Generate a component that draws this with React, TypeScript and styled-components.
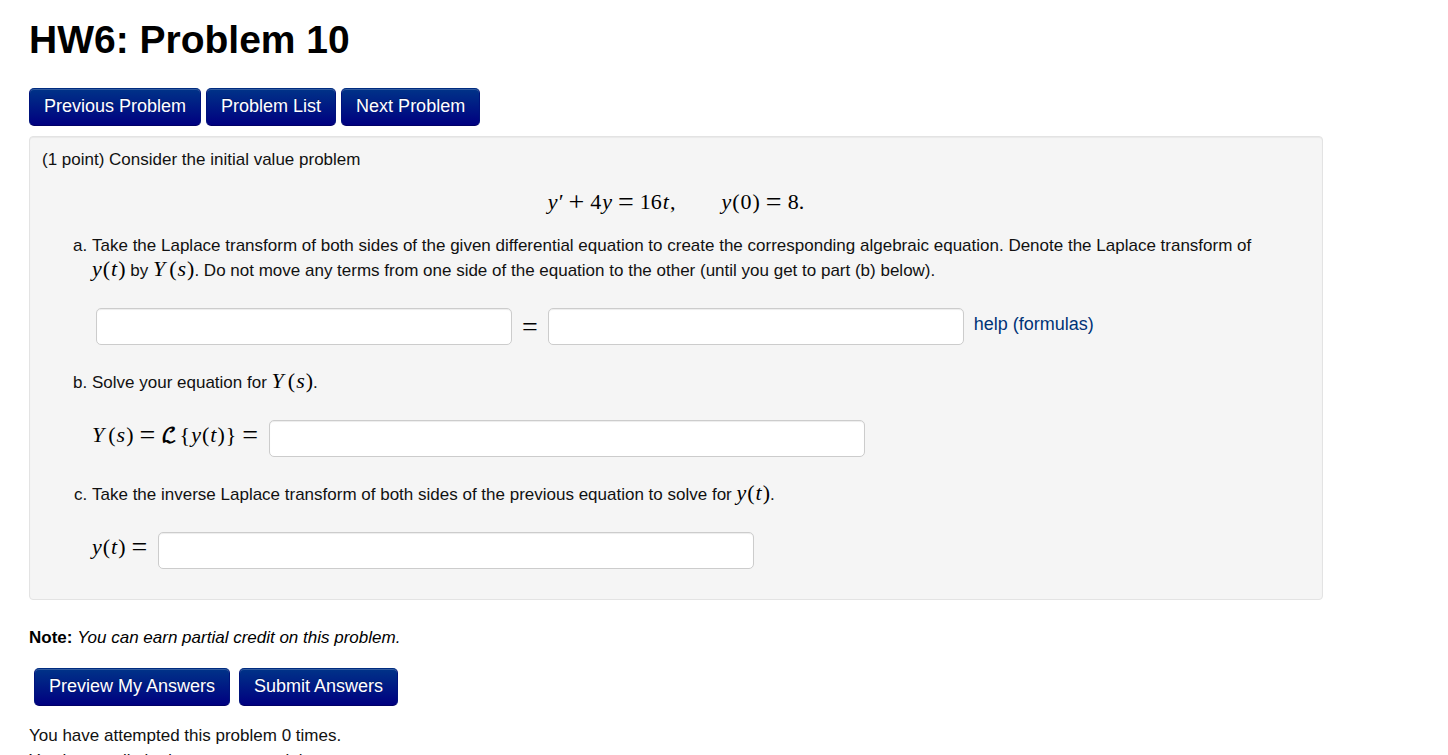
import React from 'react';
import styled, { createGlobalStyle } from 'styled-components';

const GlobalStyle = createGlobalStyle`
  html {
    scrollbar-width: none;
  }
  body {
    margin: 0;
    background: #fff;
    color: #111;
    font: 17px/25px "Liberation Sans", Arial, sans-serif;
  }
`;

const Page = styled.main`
  padding: 15px 125px 25px 29px;
`;

const Title = styled.h1`
  margin: 0 0 23px;
  color: #000;
  font-size: 39px;
  line-height: 50px;
`;

const ButtonRow = styled.div<{ $gap: number; $inset?: number }>`
  display: flex;
  flex-wrap: wrap;
  gap: ${(p) => p.$gap}px;
  padding-left: ${(p) => p.$inset ?? 0}px;
`;

const Button = styled.button`
  height: 38px;
  padding: 0 14px 2px;
  border: 1px solid;
  border-color: #002c80 #00137c #000066;
  border-radius: 5px;
  background: linear-gradient(#003388, #000080);
  box-shadow: inset 0 1px 0 rgba(255, 255, 255, 0.2);
  color: #fff;
  font: 18px/25px "Liberation Sans", Arial, sans-serif;
  text-shadow: 0 -1px 0 rgba(0, 0, 0, 0.25);
  cursor: pointer;
`;

const Panel = styled.section`
  margin: 10px 0 25px;
  padding: 10px 12px 30px;
  border: 1px solid #e3e3e3;
  border-radius: 4px;
  background: #f5f5f5;
  box-shadow: inset 0 1px 1px rgba(0, 0, 0, 0.05);
`;

const Paragraph = styled.p`
  margin: 0;
`;

const Display = styled.div`
  display: flex;
  justify-content: center;
  gap: 46px;
  margin: 20px 0 21px;
`;

const Parts = styled.ol`
  display: flex;
  flex-direction: column;
  gap: 25px;
  margin: 0;
  padding: 0 40px 0 50px;
  list-style: lower-alpha;
`;

const AnswerRow = styled.div<{ $inset?: number }>`
  display: flex;
  align-items: center;
  gap: 10px;
  margin-top: 25px;
  padding-left: ${(p) => p.$inset ?? 0}px;
`;

const Answer = styled.input<{ $width: number }>`
  box-sizing: border-box;
  flex: 0 1 ${(p) => p.$width}px;
  min-width: 0;
  height: 37px;
  padding: 5px 8px;
  border: 1px solid #ccc;
  border-radius: 5px;
  background: #fff;
  box-shadow: inset 0 1px 1px rgba(0, 0, 0, 0.075);
  font: inherit;
`;

const AnswerLabel = styled.label`
  padding: 0 1px 4px 0;
`;

const HelpLink = styled.a`
  padding-bottom: 4px;
  color: #003377;
  font-size: 18px;
  text-decoration: none;
`;

const Formula = styled.span`
  display: inline-flex;
  align-items: baseline;
  gap: 1px;
  height: 20px;
  color: #000;
  font: 22px/20px "Liberation Serif", "Times New Roman", serif;
  white-space: nowrap;
`;

const Operator = styled.span`
  align-self: center;
  margin: 0 5px;
  font-size: 28px;

  &:first-child {
    margin-left: 0;
  }
  &:last-child {
    margin-right: 0;
  }
`;

const Capital = styled.i`
  margin-right: 3px;
`;

const Script = styled.span`
  margin-right: 2px;
  font-family: "DejaVu Math TeX Gyre", "DejaVu Sans", serif;
  font-size: 20px;
  font-weight: bold;
`;

const Equals = () => <Operator>=</Operator>;

const YofT = () => (
  <>
    <i>y</i>
    <span>(</span>
    <i>t</i>
    <span>)</span>
  </>
);

const YofS = () => (
  <>
    <Capital>Y</Capital>
    <span>(</span>
    <i>s</i>
    <span>)</span>
  </>
);

const Note = styled.p`
  margin: 0 0 18px;
  color: #000;
`;

const Attempts = styled.div`
  margin-top: 17px;
`;

export default function App() {
  return (
    <>
      <GlobalStyle />
      <Page>
        <Title>HW6: Problem 10</Title>
        <ButtonRow $gap={5}>
          <Button type="button">Previous Problem</Button>
          <Button type="button">Problem List</Button>
          <Button type="button">Next Problem</Button>
        </ButtonRow>
        <Panel>
          <Paragraph>(1 point) Consider the initial value problem</Paragraph>
          <Display>
            <Formula>
              <i>y′</i>
              <Operator>+</Operator>
              <span>4</span>
              <i>y</i>
              <Equals />
              <span>16</span>
              <i>t</i>
              <span>,</span>
            </Formula>
            <Formula>
              <i>y</i>
              <span>(</span>
              <span>0</span>
              <span>)</span>
              <Equals />
              <span>8.</span>
            </Formula>
          </Display>
          <Parts>
            <li>
              Take the Laplace transform of both sides of the given differential equation to create the
              corresponding algebraic equation. Denote the Laplace transform of{' '}
              <Formula><YofT /></Formula> by <Formula><YofS /></Formula>. Do not move any terms from one
              side of the equation to the other (until you get to part (b) below).
              <AnswerRow $inset={4}>
                <Answer $width={416} aria-label="Left side of the equation" />
                <Formula><Equals /></Formula>
                <Answer $width={416} aria-label="Right side of the equation" />
                <HelpLink href="#formulas">help (formulas)</HelpLink>
              </AnswerRow>
            </li>
            <li>
              Solve your equation for <Formula><YofS /></Formula>.
              <AnswerRow>
                <AnswerLabel htmlFor="transform">
                  <Formula>
                    <YofS />
                    <Equals />
                    <Script>ℒ</Script>
                    <span>{'{'}</span>
                    <YofT />
                    <span>{'}'}</span>
                    <Equals />
                  </Formula>
                </AnswerLabel>
                <Answer id="transform" $width={596} />
              </AnswerRow>
            </li>
            <li>
              Take the inverse Laplace transform of both sides of the previous equation to solve for{' '}
              <Formula><YofT /></Formula>.
              <AnswerRow>
                <AnswerLabel htmlFor="solution">
                  <Formula>
                    <YofT />
                    <Equals />
                  </Formula>
                </AnswerLabel>
                <Answer id="solution" $width={596} />
              </AnswerRow>
            </li>
          </Parts>
        </Panel>
        <Note>
          <b>Note:</b> <i>You can earn partial credit on this problem.</i>
        </Note>
        <ButtonRow $gap={9} $inset={5}>
          <Button type="button">Preview My Answers</Button>
          <Button type="submit">Submit Answers</Button>
        </ButtonRow>
        <Attempts>
          <Paragraph>You have attempted this problem 0 times.</Paragraph>
          <Paragraph>You have unlimited attempts remaining.</Paragraph>
        </Attempts>
      </Page>
    </>
  );
}
